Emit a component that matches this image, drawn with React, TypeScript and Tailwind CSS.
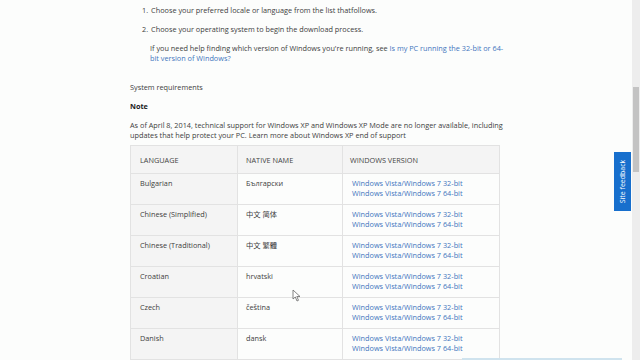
const rows = [
  { lang: "Bulgarian", native: "Български" },
  { lang: "Chinese (Simplified)", native: "中文 简体" },
  { lang: "Chinese (Traditional)", native: "中文 繁體" },
  { lang: "Croatian", native: "hrvatski" },
  { lang: "Czech", native: "čeština" },
  { lang: "Danish", native: "dansk" },
];

function VersionLinks() {
  return (
    <div className="text-[#3f75bd]">
      <div>Windows Vista/Windows 7 32-bit</div>
      <div>Windows Vista/Windows 7 64-bit</div>
    </div>
  );
}

export default function App() {
  return (
    <div
      className="relative flex w-[640px] h-[360px] overflow-hidden bg-[#fcfdfc] text-[7.3px] leading-[10px] text-[#404040]"
      style={{ fontFamily: '"Open Sans", "Noto Sans CJK SC", sans-serif' }}
    >
      <main className="flex-1 pl-[130px] pt-[5px]">
        <ol className="pl-[12px]">
          <li className="flex gap-[3px]">
            <span>1.</span>
            <span>Choose your preferred locale or language from the list thatfollows.</span>
          </li>
          <li className="flex gap-[3px] mt-[9px]">
            <span>2.</span>
            <span>Choose your operating system to begin the download process.</span>
          </li>
        </ol>
        <p className="pl-[20px] mt-[9px] w-[376px]">
          If you need help finding which version of Windows you're running, see{" "}
          <span className="text-[#3f75bd]">Is my PC running the 32-bit or 64-bit version of Windows?</span>
        </p>
        <p className="mt-[19px]">System requirements</p>
        <p className="mt-[9px] font-bold text-[#222]">Note</p>
        <p className="mt-[9px] w-[382px]">
          As of April 8, 2014, technical support for Windows XP and Windows XP Mode are no longer available, including
          updates that help protect your PC. Learn more about Windows XP end of support
        </p>
        <table className="mt-[5px] w-[370px] border-collapse border border-[#e2e2e2]">
          <thead>
            <tr className="h-[28px] bg-[#f4f4f4] text-[#444]">
              <th className="w-[107px] pl-[9px] text-left font-normal border border-[#e2e2e2]">LANGUAGE</th>
              <th className="w-[105px] pl-[8px] text-left font-normal border border-[#e2e2e2]">NATIVE NAME</th>
              <th className="pl-[7px] text-left font-normal border border-[#e2e2e2]">WINDOWS VERSION</th>
            </tr>
          </thead>
          <tbody>
            {rows.map((r) => (
              <tr key={r.lang} className="h-[31px] align-top">
                <td className="bg-[#f4f4f4] pl-[9px] pt-[4px] border border-[#e2e2e2]">{r.lang}</td>
                <td className="pl-[8px] pt-[4px] border border-[#e2e2e2]">{r.native}</td>
                <td className="pl-[9px] pt-[4px] border border-[#e2e2e2]">
                  <VersionLinks />
                </td>
              </tr>
            ))}
          </tbody>
        </table>
      </main>

      <div className="w-[8px] h-full bg-[#ededed] pt-[87px] flex justify-center">
        <div className="w-[6px] h-[85px] bg-[#c3c3c3]" />
      </div>

      <div className="absolute left-[614px] top-[152px] w-[17px] h-[59px] bg-[#176fcd] flex items-center justify-center">
        <span className="-rotate-90 whitespace-nowrap text-white text-[7px] leading-none">Site feedback</span>
      </div>

      <div className="absolute left-[462px] top-[358px] w-[160px] h-[2px] bg-[#cfe3ee]" />

      <svg className="absolute left-[292px] top-[289px]" width="9" height="13" viewBox="0 0 9 13">
        <path d="M1 1 L1 10 L3.3 8 L5 12 L6.5 11.3 L4.8 7.5 L8 7.5 Z" fill="#fff" stroke="#666" strokeWidth="0.8" />
      </svg>
    </div>
  );
}
